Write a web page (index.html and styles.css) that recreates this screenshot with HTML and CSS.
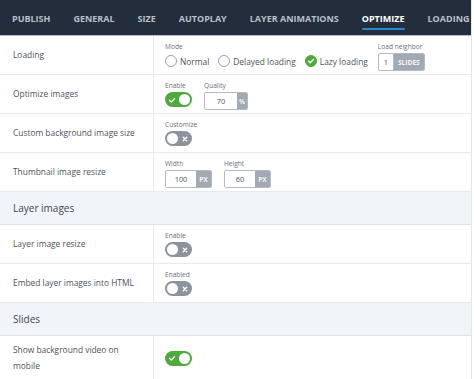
FILE: index.html
```html
<!DOCTYPE html>
<html>
<head>
<meta charset="utf-8">
<link rel="stylesheet" href="styles.css">
</head>
<body>
<div class="page">
  <nav class="tabs">
    <span class="tab">PUBLISH</span>
    <span class="tab">GENERAL</span>
    <span class="tab">SIZE</span>
    <span class="tab">AUTOPLAY</span>
    <span class="tab">LAYER ANIMATIONS</span>
    <span class="tab active">OPTIMIZE</span>
    <span class="tab">LOADING</span>
  </nav>

  <div class="row">
    <div class="label">Loading</div>
    <div class="ctrl">
      <div class="field">
        <div class="cap">Mode</div>
        <div class="radios">
          <span class="radio"><span class="dot"></span>Normal</span>
          <span class="radio"><span class="dot"></span>Delayed loading</span>
          <span class="radio"><span class="dot on"><svg viewBox="0 0 10 10"><path d="M2.6 5.2 L4.3 6.8 L7.4 3.6" fill="none" stroke="#fff" stroke-width="1.4" stroke-linecap="round" stroke-linejoin="round"/></svg></span>Lazy loading</span>
        </div>
      </div>
      <div class="field neighbor">
        <div class="cap">Load neighbor</div>
        <div class="input w-n"><span class="val">1</span><span class="unit">SLIDES</span></div>
      </div>
    </div>
  </div>

  <div class="row">
    <div class="label">Optimize images</div>
    <div class="ctrl">
      <div class="field">
        <div class="cap">Enable</div>
        <span class="toggle on"><svg class="mark" viewBox="0 0 10 10"><path d="M2.5 5.3 L4.3 7 L7.6 3.6" fill="none" stroke="#fff" stroke-width="1.3" stroke-linecap="round" stroke-linejoin="round"/></svg><span class="knob"></span></span>
      </div>
      <div class="field">
        <div class="cap">Quality</div>
        <div class="input w-q"><span class="val">70</span><span class="unit">%</span></div>
      </div>
    </div>
  </div>

  <div class="row">
    <div class="label">Custom background image size</div>
    <div class="ctrl">
      <div class="field">
        <div class="cap">Customize</div>
        <span class="toggle"><span class="knob"></span><svg class="mark" viewBox="0 0 10 10"><path d="M3.3 3.3 L6.7 6.7 M6.7 3.3 L3.3 6.7" fill="none" stroke="#fff" stroke-width="1.4" stroke-linecap="round"/></svg></span>
      </div>
    </div>
  </div>

  <div class="row">
    <div class="label">Thumbnail image resize</div>
    <div class="ctrl">
      <div class="field">
        <div class="cap">Width</div>
        <div class="input w-px"><span class="val">100</span><span class="unit">PX</span></div>
      </div>
      <div class="field">
        <div class="cap">Height</div>
        <div class="input w-px"><span class="val">60</span><span class="unit">PX</span></div>
      </div>
    </div>
  </div>

  <div class="section">Layer images</div>

  <div class="row">
    <div class="label">Layer image resize</div>
    <div class="ctrl">
      <div class="field">
        <div class="cap">Enable</div>
        <span class="toggle"><span class="knob"></span><svg class="mark" viewBox="0 0 10 10"><path d="M3.3 3.3 L6.7 6.7 M6.7 3.3 L3.3 6.7" fill="none" stroke="#fff" stroke-width="1.4" stroke-linecap="round"/></svg></span>
      </div>
    </div>
  </div>

  <div class="row">
    <div class="label">Embed layer images into HTML</div>
    <div class="ctrl">
      <div class="field">
        <div class="cap">Enabled</div>
        <span class="toggle"><span class="knob"></span><svg class="mark" viewBox="0 0 10 10"><path d="M3.3 3.3 L6.7 6.7 M6.7 3.3 L3.3 6.7" fill="none" stroke="#fff" stroke-width="1.4" stroke-linecap="round"/></svg></span>
      </div>
    </div>
  </div>

  <div class="section">Slides</div>

  <div class="row tall">
    <div class="label">Show background video on<br>mobile</div>
    <div class="ctrl center">
      <span class="toggle on"><svg class="mark" viewBox="0 0 10 10"><path d="M2.5 5.3 L4.3 7 L7.6 3.6" fill="none" stroke="#fff" stroke-width="1.3" stroke-linecap="round" stroke-linejoin="round"/></svg><span class="knob"></span></span>
    </div>
  </div>
</div>
</body>
</html>
```
FILE: styles.css
```css
* { box-sizing: border-box; }
html, body { margin: 0; padding: 0; background: #fff; }
body {
  font-family: "Open Sans", "Liberation Sans", sans-serif;
  width: 474px;
  height: 379px;
  overflow: hidden;
}
.page {
  width: 472px;
  border-right: 1px solid #e4e7ec;
}
.tabs {
  height: 36px;
  background: #232d3b;
  border-bottom: 1px solid #b9c0c8;
  display: flex;
  align-items: center;
  padding-left: 12px;
  padding-top: 1px;
  gap: 23px;
  white-space: nowrap;
}
.tab {
  color: #b7c0ca;
  font-weight: 700;
  font-size: 9px;
  position: relative;
}
.tab.active { color: #fff; }
.tab.active::after {
  content: "";
  position: absolute;
  left: 0;
  right: 0;
  top: 16px;
  height: 2px;
  background: #1f8ad6;
  border-radius: 1px;
}
.row {
  display: flex;
  height: 39px;
  border-bottom: 1px solid #e6e9ee;
}
.row.tall { height: 44px; border-bottom: none; }
.label {
  width: 154px;
  flex: none;
  border-right: 1px solid #e6e9ee;
  display: flex;
  align-items: center;
  padding-left: 13px;
  font-size: 8.4px;
  color: #4b535d;
  line-height: 16px;
}
.ctrl {
  flex: 1;
  display: flex;
  align-items: flex-start;
  padding: 6px 0 0 11px;
  gap: 12px;
}
.ctrl.center { align-items: center; padding-top: 0; }
.field { display: flex; flex-direction: column; }
.cap {
  font-size: 6.6px;
  color: #69717b;
  height: 9px;
  line-height: 9px;
  margin-bottom: 2px;
}
.radios { display: flex; gap: 9px; padding-top: 2px; }
.radio {
  display: flex;
  align-items: center;
  gap: 3px;
  font-size: 8.4px;
  color: #4b535d;
}
.dot {
  width: 12px;
  height: 12px;
  border-radius: 50%;
  border: 1px solid #9aa1aa;
  display: inline-flex;
}
.dot.on { background: #4eaa3c; border-color: #4eaa3c; }
.dot svg { width: 100%; height: 100%; }
.neighbor { margin-left: -2px; }
.input {
  display: flex;
  height: 18px;
  border: 1px solid #b3bac3;
  border-radius: 2px;
  overflow: hidden;
}
.input .val {
  flex: 1;
  display: flex;
  align-items: center;
  justify-content: center;
  font-size: 7.4px;
  color: #4b535d;
  background: #fff;
}
.input .unit {
  background: #a1a9b3;
  color: #f4f6f8;
  font-size: 6.6px;
  font-weight: 700;
  display: flex;
  align-items: center;
  justify-content: center;
}
.w-n { width: 47px; }
.w-n .val { flex: none; width: 15px; border-right: 1px solid #b3bac3; }
.w-n .unit { flex: 1; }
.w-q { width: 44px; }
.w-q .unit { width: 10px; }
.w-px { width: 47px; }
.w-px .unit { width: 15px; }
.toggle {
  width: 27px;
  height: 15px;
  border-radius: 8px;
  background: #8b939c;
  display: flex;
  align-items: center;
  justify-content: space-between;
  padding: 0 2px;
}
.toggle.on { background: #4eaa3c; }
.toggle .knob {
  width: 11px;
  height: 11px;
  border-radius: 50%;
  background: #fff;
}
.toggle .mark { width: 10px; height: 10px; }
.section {
  height: 33px;
  background: #f1f4f8;
  border-bottom: 1px solid #dfe3e9;
  display: flex;
  align-items: center;
  padding-left: 13px;
  font-size: 10px;
  color: #3f4750;
}
```
